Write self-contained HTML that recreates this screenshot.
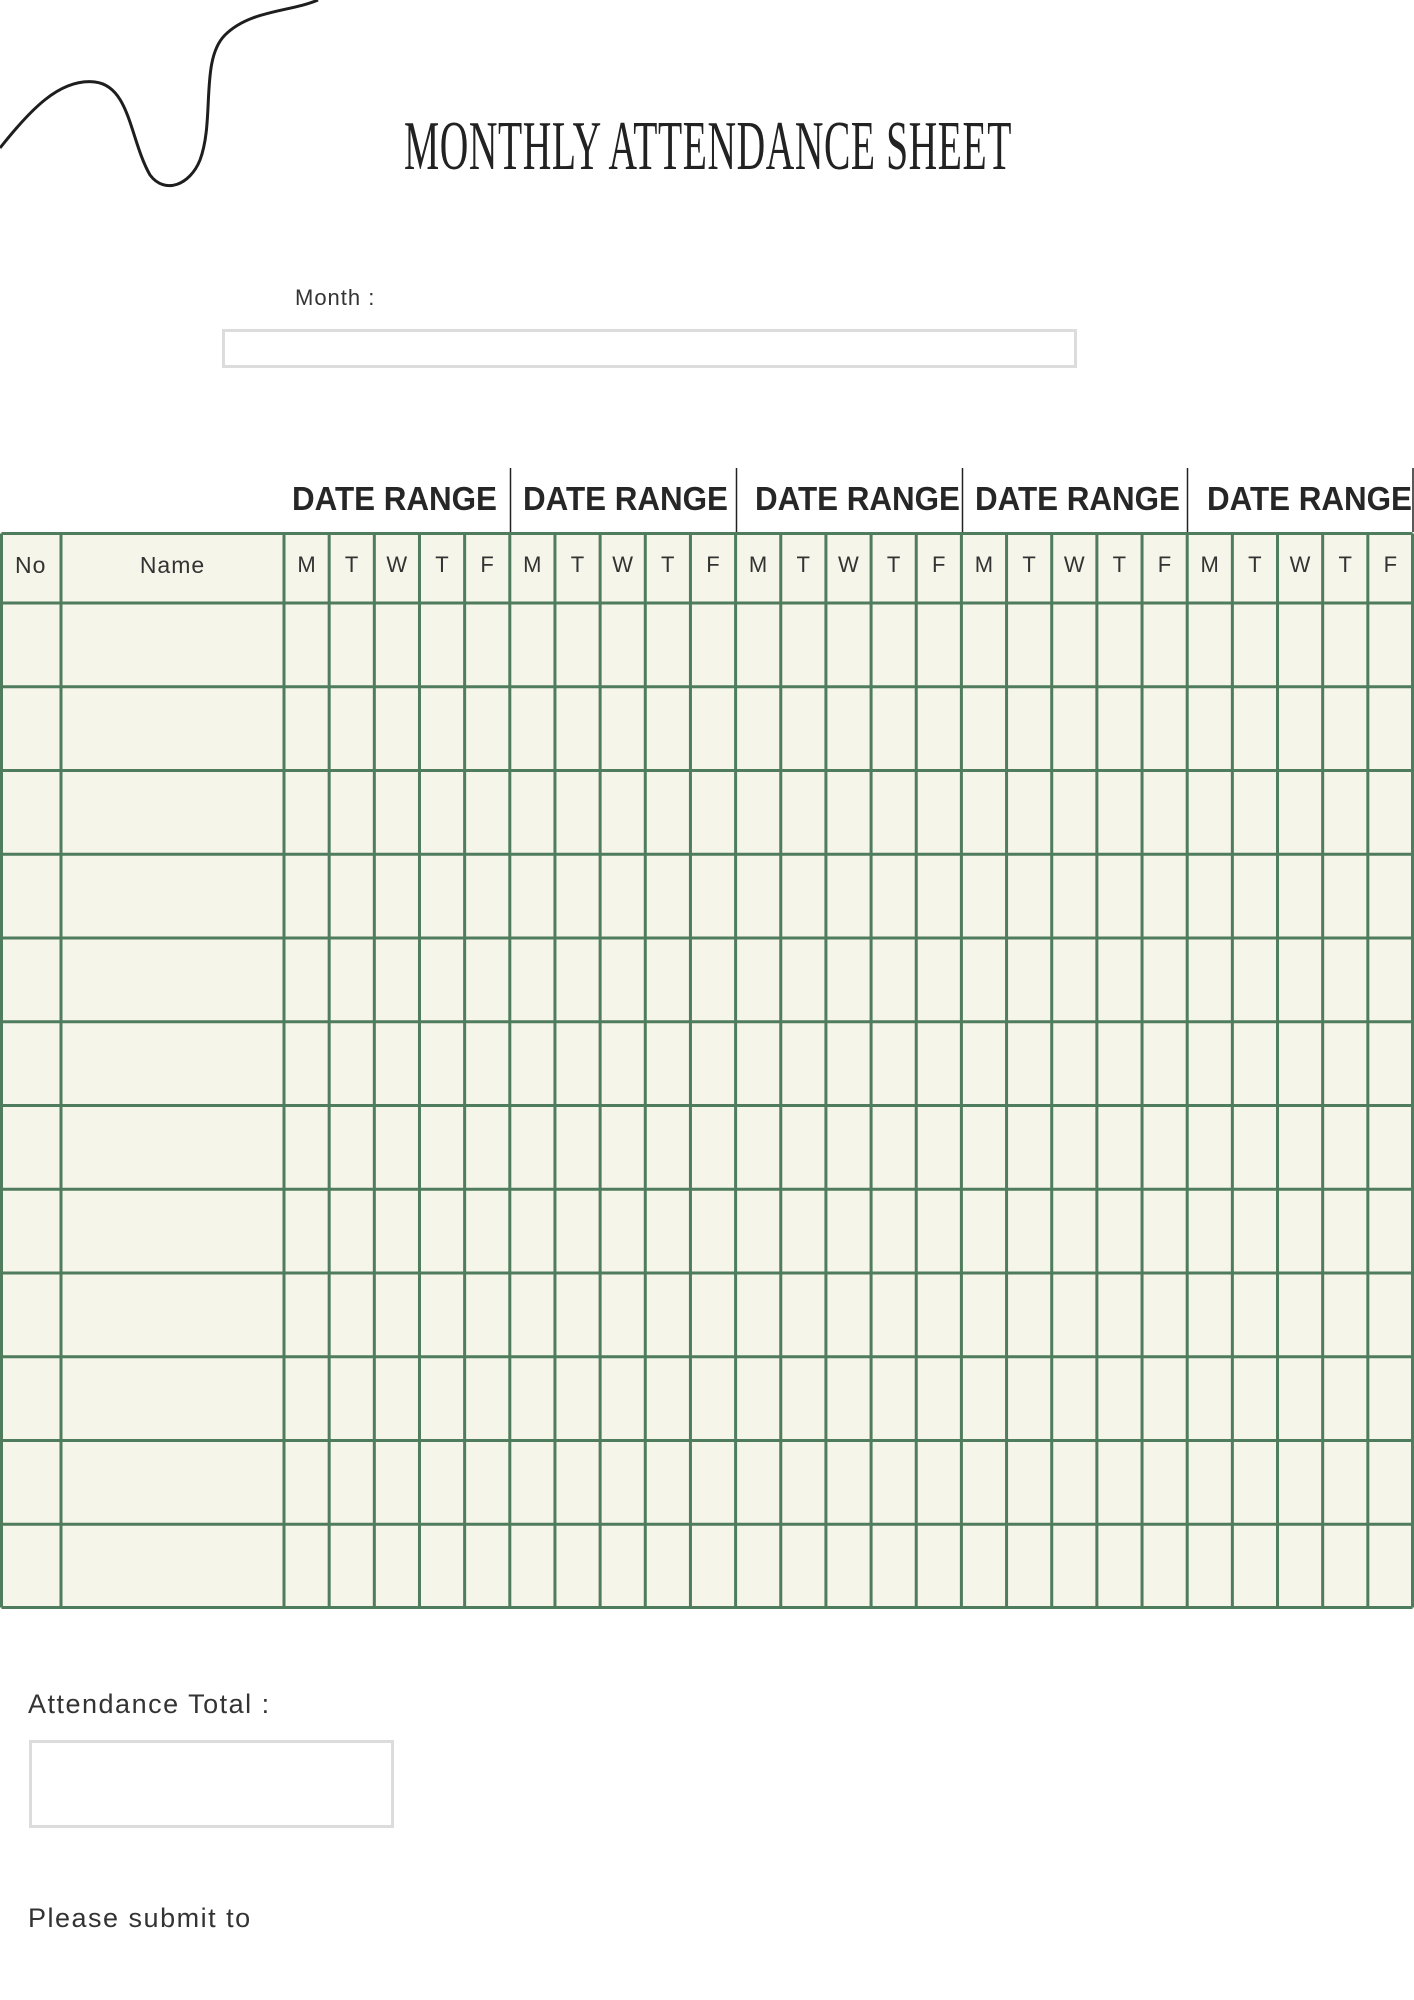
<!DOCTYPE html>
<html><head><meta charset="utf-8"><style>
html,body{margin:0;padding:0;background:#fff;}
body{width:1414px;height:2000px;position:relative;overflow:hidden;font-family:"Liberation Sans",sans-serif;color:#2a2a2a;}
.a{position:absolute;white-space:nowrap;}
.title{left:404px;top:112px;font-family:"Liberation Serif",serif;font-size:70px;line-height:70px;transform:scaleX(0.565);transform-origin:0 0;color:#222;letter-spacing:1px;}
.dr{font-weight:bold;font-size:33px;top:480px;transform:scaleX(0.95);transform-origin:0 0;color:#262626;}
.hd{top:552px;font-size:22px;width:45px;text-align:center;color:#333;font-weight:300;}
</style></head><body>
<svg class="a" style="left:0;top:0" width="340" height="200" viewBox="0 0 340 200">
<path d="M0,148 C30,110 60,78 95,82 C130,86 130,140 150,175 C165,195 190,185 200,160 C215,120 200,60 225,35 C250,10 290,12 318,0" fill="none" stroke="#1e1e1e" stroke-width="3"/>
</svg>
<div class="a title">MONTHLY ATTENDANCE SHEET</div>
<div class="a" style="left:295px;top:285px;font-size:22px;color:#333;letter-spacing:1px">Month :</div>
<div class="a" style="left:222px;top:329px;width:849px;height:33px;border:3px solid #dcdcdc"></div>

<div class="a dr" style="left:292px">DATE RANGE</div>
<div class="a dr" style="left:523px">DATE RANGE</div>
<div class="a dr" style="left:755px">DATE RANGE</div>
<div class="a dr" style="left:975px">DATE RANGE</div>
<div class="a dr" style="left:1207px">DATE RANGE</div>

<svg class="a" style="left:0;top:0" width="1414" height="2000">
<g stroke="#222" stroke-width="1.5">
<line x1="510.5" y1="468" x2="510.5" y2="532"/><line x1="736.5" y1="468" x2="736.5" y2="532"/>
<line x1="962.5" y1="468" x2="962.5" y2="532"/><line x1="1187.5" y1="468" x2="1187.5" y2="532"/>
<line x1="1413" y1="468" x2="1413" y2="532"/>
</g>
<rect x="1.5" y="533.5" width="1411" height="1074" fill="#f5f5e9"/>
<g stroke="#4e7c5c" stroke-width="3" id="g"></g>
</svg>
<div id="hdrs"></div>
<script>
(function(){
var g=document.getElementById('g'),ns='http://www.w3.org/2000/svg';
function L(x1,y1,x2,y2){var l=document.createElementNS(ns,'line');l.setAttribute('x1',x1);l.setAttribute('y1',y1);l.setAttribute('x2',x2);l.setAttribute('y2',y2);g.appendChild(l);}
var xs=[1.5,61,284];for(var i=1;i<=25;i++)xs.push(284+i*45.16);xs[xs.length-1]=1412.5;
var ys=[533.5,603];for(var j=1;j<=12;j++)ys.push(603+j*83.75);ys[ys.length-1]=1607.5;
xs.forEach(function(x){L(x,533.5,x,1607.5);});
ys.forEach(function(y){L(1.5,y,1412.5,y);});
var h='<div class="a" style="left:15px;top:552px;font-size:23px;color:#333;letter-spacing:1px">No</div><div class="a" style="left:61px;width:223px;text-align:center;top:552px;font-size:23px;color:#333;letter-spacing:1px">Name</div>';
var d=['M','T','W','T','F'];
for(var i=0;i<25;i++)h+='<div class="a hd" style="left:'+(284+i*45.16)+'px">'+d[i%5]+'</div>';
document.getElementById('hdrs').innerHTML=h;
})();
</script>
<div class="a" style="left:28px;top:1689px;font-size:27px;color:#333;letter-spacing:1.5px">Attendance Total :</div>
<div class="a" style="left:29px;top:1740px;width:359px;height:82px;border:3px solid #dcdcdc"></div>
<div class="a" style="left:28px;top:1903px;font-size:27px;color:#333;letter-spacing:1.5px">Please submit to</div>
</body></html>
